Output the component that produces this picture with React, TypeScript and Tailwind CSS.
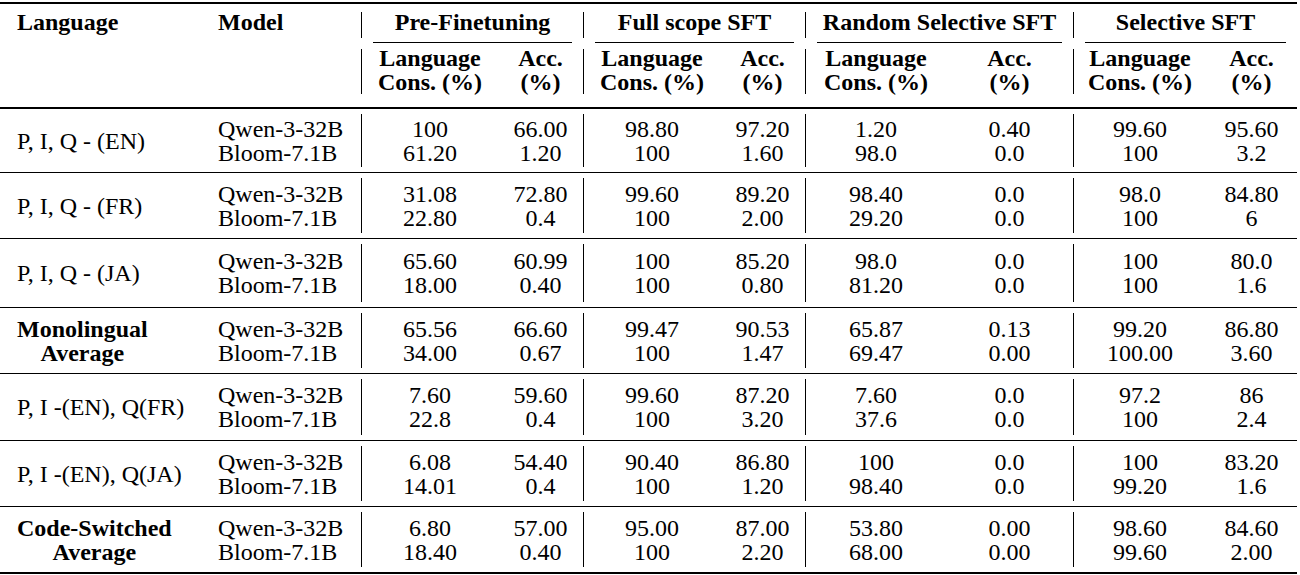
import { Fragment } from "react";

type Group = {
  label: string[];
  bold?: boolean;
  h: string;
  qwen: string[];
  bloom: string[];
};

const groups: Group[] = [
  {
    label: ["P, I, Q - (EN)"],
    h: "h-[63px]",
    qwen: ["100", "66.00", "98.80", "97.20", "1.20", "0.40", "99.60", "95.60"],
    bloom: ["61.20", "1.20", "100", "1.60", "98.0", "0.0", "100", "3.2"],
  },
  {
    label: ["P, I, Q - (FR)"],
    h: "h-[65px]",
    qwen: ["31.08", "72.80", "99.60", "89.20", "98.40", "0.0", "98.0", "84.80"],
    bloom: ["22.80", "0.4", "100", "2.00", "29.20", "0.0", "100", "6"],
  },
  {
    label: ["P, I, Q - (JA)"],
    h: "h-[68px]",
    qwen: ["65.60", "60.99", "100", "85.20", "98.0", "0.0", "100", "80.0"],
    bloom: ["18.00", "0.40", "100", "0.80", "81.20", "0.0", "100", "1.6"],
  },
  {
    label: ["Monolingual", "Average"],
    bold: true,
    h: "h-[65px]",
    qwen: ["65.56", "66.60", "99.47", "90.53", "65.87", "0.13", "99.20", "86.80"],
    bloom: ["34.00", "0.67", "100", "1.47", "69.47", "0.00", "100.00", "3.60"],
  },
  {
    label: ["P, I -(EN), Q(FR)"],
    h: "h-[66px]",
    qwen: ["7.60", "59.60", "99.60", "87.20", "7.60", "0.0", "97.2", "86"],
    bloom: ["22.8", "0.4", "100", "3.20", "37.6", "0.0", "100", "2.4"],
  },
  {
    label: ["P, I -(EN), Q(JA)"],
    h: "h-[65px]",
    qwen: ["6.08", "54.40", "90.40", "86.80", "100", "0.0", "100", "83.20"],
    bloom: ["14.01", "0.4", "100", "1.20", "98.40", "0.0", "99.20", "1.6"],
  },
  {
    label: ["Code-Switched", "Average"],
    bold: true,
    h: "h-[65px]",
    qwen: ["6.80", "57.00", "95.00", "87.00", "53.80", "0.00", "98.60", "84.60"],
    bloom: ["18.40", "0.40", "100", "2.20", "68.00", "0.00", "99.60", "2.00"],
  },
];

const titles = ["Pre-Finetuning", "Full scope SFT", "Random Selective SFT", "Selective SFT"];

const cols =
  "grid grid-cols-[200px_161px_1px_136px_85px_1px_136px_85px_1px_140px_127px_1px_132px_91px]";

const Pair = ({ a, b }: { a: string; b: string }) => (
  <div className="flex flex-col items-center justify-center">
    <span>{a}</span>
    <span>{b}</span>
  </div>
);

const App = () => {
  return (
    <div className="min-h-screen w-[1300px] bg-white [font-family:'Liberation_Serif','Times_New_Roman',Times,serif] text-[24px] leading-[24px] text-black">
      <div className="w-[1297px]">
        {/* top rule */}
        <div className="mt-[2px] h-[2px] bg-black" />

        {/* header */}
        <div className={cols}>
          <div className="row-span-2 pl-[17px] pt-[6px] font-bold">Language</div>
          <div className="row-span-2 pl-[18px] pt-[6px] font-bold">Model</div>
          {titles.map((t) => (
            <Fragment key={t}>
              <div className="mt-[8px] mb-[5px] bg-black" />
              <div className="col-span-2 flex h-[39px] flex-col font-bold">
                <div className="pt-[6px] text-center">{t}</div>
                <div className="mx-[11px] mt-auto h-px bg-black" />
              </div>
            </Fragment>
          ))}
          {titles.map((t) => (
            <Fragment key={t + "-sub"}>
              <div className="mt-[6px] mb-[13px] bg-black" />
              <div className="flex h-[64px] flex-col items-center pt-[3px] font-bold">
                <span>Language</span>
                <span>Cons. (%)</span>
              </div>
              <div className="flex flex-col items-center pt-[3px] font-bold">
                <span>Acc.</span>
                <span>(%)</span>
              </div>
            </Fragment>
          ))}
        </div>
        <div className="h-[2px] bg-black" />

        {/* body */}
        {groups.map((g, gi) => (
          <Fragment key={gi}>
            <div className={`${cols} ${g.h}`}>
              <div className="flex items-center pl-[17px]">
                {g.bold ? (
                  <div className="inline-flex flex-col items-center font-bold">
                    {g.label.map((l) => (
                      <span key={l}>{l}</span>
                    ))}
                  </div>
                ) : (
                  <span>{g.label[0]}</span>
                )}
              </div>
              <div className="flex flex-col justify-center pl-[18px]">
                <span>Qwen-3-32B</span>
                <span>Bloom-7.1B</span>
              </div>
              {[0, 1, 2, 3].map((i) => (
                <Fragment key={i}>
                  <div className="my-[5px] bg-black" />
                  <Pair a={g.qwen[2 * i]} b={g.bloom[2 * i]} />
                  <Pair a={g.qwen[2 * i + 1]} b={g.bloom[2 * i + 1]} />
                </Fragment>
              ))}
            </div>
            {gi < groups.length - 1 ? (
              <div className="h-px bg-black" />
            ) : (
              <div className="h-[2px] bg-black" />
            )}
          </Fragment>
        ))}
      </div>
    </div>
  );
};

export default App;
